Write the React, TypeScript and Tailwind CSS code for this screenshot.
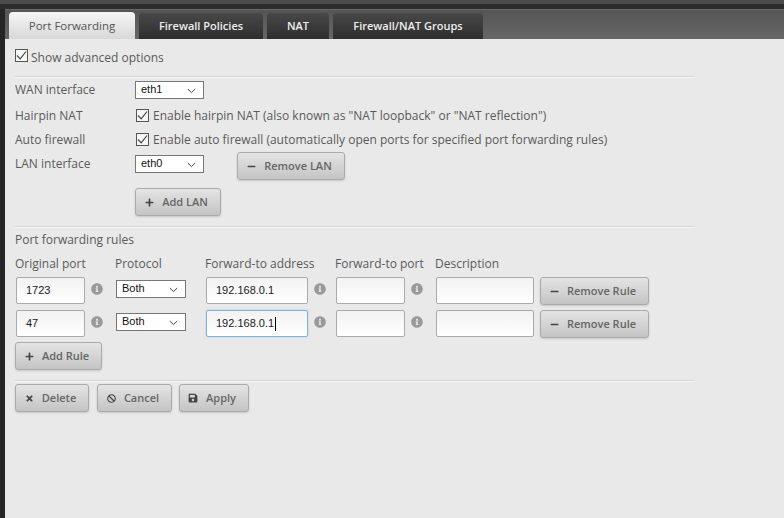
import React from "react";
import { FaInfoCircle, FaPlus, FaMinus, FaTimes, FaBan, FaSave } from "react-icons/fa";

const Check = () => (
  <span className="flex h-[13px] w-[13px] shrink-0 items-center justify-center border border-[#555] bg-[#f6f6f6]">
    <svg width="11" height="11" viewBox="0 0 11 11" fill="none">
      <path d="M1 5.5 L4.2 8.8 L10 1.5" stroke="#444" strokeWidth="1.2" />
    </svg>
  </span>
);

const Tab = ({ label, w, active }: { label: string; w: string; active?: boolean }) => (
  <div
    className={
      active
        ? `${w} flex h-[27px] items-center justify-center rounded-t-[4px] bg-gradient-to-b from-[#f6f6f6] to-[#d8d8d8] text-[11.5px] text-[#555]`
        : `${w} flex h-[27px] items-center justify-center rounded-t-[4px] border-t border-[#555] bg-gradient-to-b from-[#484848] to-[#2e2e2e] text-[11px] font-semibold text-[#eee]`
    }
  >
    {label}
  </div>
);

const Select = ({ value, w, h = "h-[18px]" }: { value: string; w: string; h?: string }) => (
  <div className={`${w} ${h} flex items-center justify-between border border-[#767676] bg-white pl-[5px] pr-[7px] font-['Liberation_Sans',sans-serif] text-[11px] leading-none text-[#111]`}>
    <span className="-mt-[2px]">{value}</span>
    <svg width="9" height="6" viewBox="0 0 9 6" fill="none" className="mt-[2px]">
      <path d="M0.8 1 L4.5 4.6 L8.2 1" stroke="#444" strokeWidth="1" />
    </svg>
  </div>
);

const Button = ({ icon, label, w, h = "h-[28px]", gap = "gap-[8px]" }: { icon: React.ReactNode; label: string; w: string; h?: string; gap?: string }) => (
  <div className={`${w} ${h} ${gap} flex shrink-0 items-center justify-center rounded-[3px] border border-[#aaa] bg-gradient-to-b from-[#e4e4e4] to-[#c4c4c4] pr-[4px] text-[11px] font-semibold text-[#666] shadow-[0_1px_2px_rgba(0,0,0,0.15)]`}>
    <span className="flex w-[10px] items-center justify-end text-[#444]">{icon}</span>
    <span>{label}</span>
  </div>
);

const Input = ({ value, w, focus, ml = "ml-0", caret }: { value?: string; w: string; focus?: boolean; ml?: string; caret?: boolean }) => (
  <div
    className={`${w} ${ml} flex h-[27px] shrink-0 items-center rounded-[2px] border bg-gradient-to-b from-[#f2f2f2] to-white pl-[9px] font-['Liberation_Sans',sans-serif] text-[11px] text-[#222] ${
      focus ? "border-[#7fb3d9] shadow-[0_0_2px_rgba(100,170,220,0.5)]" : "border-[#aaa]"
    }`}
  >
    {value}
    {caret && <span className="ml-px h-[14px] w-px bg-black" />}
  </div>
);

const Info = ({ ml }: { ml: string }) => (
  <FaInfoCircle className={`${ml} shrink-0 text-[#999]`} size={12} />
);

const Hr = ({ mt }: { mt: string }) => <div className={`${mt} h-px w-[680px] border-t border-[#d4d4d4] shadow-[0_1px_0_#f8f8f8]`} />;

const Row = ({ port, focus, mt, selectMl }: { port: string; focus?: boolean; mt: string; selectMl: string }) => (
  <div className={`${mt} flex h-[28px] items-start`}>
    <Input value={port} w="w-[69px]" ml="ml-px" />
    <Info ml="ml-[6px] mt-[6px]" />
    <div className={`${selectMl} mt-[3px]`}>
      <Select value="Both" w="w-[70px]" />
    </div>
    <Input value="192.168.0.1" w="w-[102px]" ml="ml-[20px]" focus={focus} caret={focus} />
    <Info ml="ml-[6px] mt-[6px]" />
    <Input w="w-[69px]" ml="ml-[10px]" />
    <Info ml="ml-[6px] mt-[6px]" />
    <Input w="w-[98px]" ml="ml-[13px]" />
    <div className="ml-[6px]">
      <Button icon={<FaMinus size={9} />} label="Remove Rule" w="w-[109px]" />
    </div>
  </div>
);

const Field = ({ label, children, h }: { label: string; children: React.ReactNode; h: string }) => (
  <div className={`${h} flex items-center`}>
    <div className="w-[120px] shrink-0">{label}</div>
    {children}
  </div>
);

export default function App() {
  return (
    <div className="h-[518px] w-[784px] overflow-hidden bg-[#252525] pl-[5px] font-['Open_Sans',sans-serif] text-[12px] text-[#5a5a5a]">
      <div className="h-[4px] bg-[#4c4c4c] -ml-[5px]" />
      <div className="h-[5px] bg-[#2c2c2c] -ml-[5px]" />
      <div className="flex h-[30px] items-end gap-[4px] border-t border-[#6a6a6a] bg-gradient-to-b from-[#555] to-[#676767] pl-[4px]">
        <Tab label="Port Forwarding" w="w-[126px]" active />
        <Tab label="Firewall Policies" w="w-[124px]" />
        <Tab label="NAT" w="w-[62px]" />
        <Tab label="Firewall/NAT Groups" w="w-[150px]" />
      </div>
      <div className="h-[479px] bg-[#e9e9e9] pl-[10px]">
        <div className="flex h-[25px] items-start gap-[3px] pt-[10px]">
          <Check />
          <span className="leading-[18px]">Show advanced options</span>
        </div>
        <Hr mt="mt-[12px]" />
        <div className="mt-[4px]">
          <Field label="WAN interface" h="h-[18px]">
            <Select value="eth1" w="w-[69px]" />
          </Field>
          <Field label="Hairpin NAT" h="h-[25px] mt-[4px]">
            <span className="ml-px -mt-px"><Check /></span>
            <span className="ml-[4px]">Enable hairpin NAT (also known as "NAT loopback" or "NAT reflection")</span>
          </Field>
          <Field label="Auto firewall" h="h-[25px] mt-[-1px]">
            <span className="ml-px -mt-px"><Check /></span>
            <span className="ml-[4px]">Enable auto firewall (automatically open ports for specified port forwarding rules)</span>
          </Field>
          <div className="mt-0 flex items-start">
            <div className="w-[120px] shrink-0 pt-[3px] leading-[18px]">LAN interface</div>
            <div className="mt-[3px]"><Select value="eth0" w="w-[69px]" /></div>
            <div className="ml-[33px]">
              <Button icon={<FaMinus size={9} />} label="Remove LAN" w="w-[108px]" />
            </div>
          </div>
          <div className="ml-[120px] mt-[8px]">
            <Button icon={<FaPlus size={9} />} label="Add LAN" w="w-[86px]" />
          </div>
        </div>
        <Hr mt="mt-[10px]" />
        <div className="mt-[4px] leading-[18px]">Port forwarding rules</div>
        <div className="mt-[6px] flex leading-[18px]">
          <div className="w-[100px]">Original port</div>
          <div className="w-[90px]">Protocol</div>
          <div className="w-[130px]">Forward-to address</div>
          <div className="w-[100px]">Forward-to port</div>
          <div>Description</div>
        </div>
        <Row port="1723" mt="mt-[4px]" selectMl="ml-[13px]" />
        <Row port="47" focus mt="mt-[5px]" selectMl="ml-[13px]" />
        <div className="mt-[4px]">
          <Button icon={<FaPlus size={9} />} label="Add Rule" w="w-[87px]" />
        </div>
        <Hr mt="mt-[10px]" />
        <div className="mt-[3px] flex">
          <Button icon={<FaTimes size={9} />} label="Delete" w="w-[74px]" />
          <div className="ml-[8px]"><Button icon={<FaBan size={9} />} label="Cancel" w="w-[75px]" /></div>
          <div className="ml-[7px]"><Button icon={<FaSave size={10} />} label="Apply" w="w-[70px]" /></div>
        </div>
      </div>
    </div>
  );
}
